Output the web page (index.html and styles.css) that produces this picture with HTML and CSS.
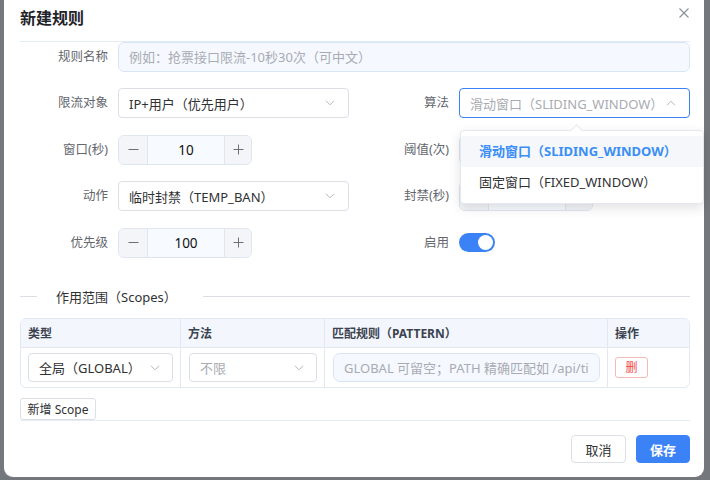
FILE: index.html
```html
<!DOCTYPE html>
<html lang="zh-CN">
<head>
<meta charset="utf-8">
<title>新建规则</title>
<link rel="stylesheet" href="styles.css">
</head>
<body>
<div class="overlay">
  <div class="dialog">
    <header class="dlg-head">
      <h2 class="dlg-title">新建规则</h2>
      <button class="close" aria-label="关闭">
        <svg width="10" height="10" viewBox="0 0 10 10"><path d="M0.5 0.5L9.5 9.5M9.5 0.5L0.5 9.5" stroke="#8b8f96" stroke-width="1.1" fill="none"/></svg>
      </button>
    </header>

    <div class="dlg-body">
      <div class="form-row">
        <label class="lbl">规则名称</label>
        <input class="input tint" placeholder="例如：抢票接口限流-10秒30次（可中文）">
      </div>

      <div class="grid2">
        <div class="item">
          <label class="lbl">限流对象</label>
          <div class="select"><span class="val">IP+用户（优先用户）</span>
            <svg class="chev" width="10" height="6" viewBox="0 0 10 6"><path d="M1 0.8L5 4.8L9 0.8" stroke="#b3b6bc" stroke-width="1" fill="none"/></svg></div>
        </div>
        <div class="item">
          <label class="lbl">算法</label>
          <div class="select focus"><span class="val muted">滑动窗口（SLIDING_WINDOW）</span>
            <svg class="chev" width="10" height="6" viewBox="0 0 10 6"><path d="M1 5.2L5 1.2L9 5.2" stroke="#b3b6bc" stroke-width="1" fill="none"/></svg></div>
        </div>

        <div class="item">
          <label class="lbl">窗口(秒)</label>
          <div class="num">
            <span class="nbtn"><svg width="11" height="11" viewBox="0 0 11 11"><path d="M0.5 5.5H10.5" stroke="#6b6f76" stroke-width="1"/></svg></span>
            <span class="nval">10</span>
            <span class="nbtn"><svg width="11" height="11" viewBox="0 0 11 11"><path d="M0.5 5.5H10.5M5.5 0.5V10.5" stroke="#6b6f76" stroke-width="1"/></svg></span>
          </div>
        </div>
        <div class="item">
          <label class="lbl">阈值(次)</label>
          <div class="num">
            <span class="nbtn"></span>
            <span class="nval"></span>
            <span class="nbtn"></span>
          </div>
        </div>

        <div class="item">
          <label class="lbl">动作</label>
          <div class="select"><span class="val">临时封禁（TEMP_BAN）</span>
            <svg class="chev" width="10" height="6" viewBox="0 0 10 6"><path d="M1 0.8L5 4.8L9 0.8" stroke="#b3b6bc" stroke-width="1" fill="none"/></svg></div>
        </div>
        <div class="item">
          <label class="lbl">封禁(秒)</label>
          <div class="num">
            <span class="nbtn"></span>
            <span class="nval"></span>
            <span class="nbtn"></span>
          </div>
        </div>

        <div class="item">
          <label class="lbl">优先级</label>
          <div class="num">
            <span class="nbtn"><svg width="11" height="11" viewBox="0 0 11 11"><path d="M0.5 5.5H10.5" stroke="#6b6f76" stroke-width="1"/></svg></span>
            <span class="nval">100</span>
            <span class="nbtn"><svg width="11" height="11" viewBox="0 0 11 11"><path d="M0.5 5.5H10.5M5.5 0.5V10.5" stroke="#6b6f76" stroke-width="1"/></svg></span>
          </div>
        </div>
        <div class="item">
          <label class="lbl">启用</label>
          <div class="switch"><span class="knob"></span></div>
        </div>
      </div>

      <div class="divider"><span class="dline short"></span><span class="dtext">作用范围（Scopes）</span><span class="dline"></span></div>

      <div class="table">
        <div class="th">类型</div>
        <div class="th">方法</div>
        <div class="th">匹配规则（PATTERN）</div>
        <div class="th">操作</div>
        <div class="td">
          <div class="select sm"><span class="val">全局（GLOBAL）</span>
            <svg class="chev" width="10" height="6" viewBox="0 0 10 6"><path d="M1 0.8L5 4.8L9 0.8" stroke="#b3b6bc" stroke-width="1" fill="none"/></svg></div>
        </div>
        <div class="td">
          <div class="select sm disabled"><span class="val muted">不限</span>
            <svg class="chev" width="10" height="6" viewBox="0 0 10 6"><path d="M1 0.8L5 4.8L9 0.8" stroke="#b3b6bc" stroke-width="1" fill="none"/></svg></div>
        </div>
        <div class="td">
          <input class="input tint sm" placeholder="GLOBAL 可留空；PATH 精确匹配如 /api/ticket/grab">
        </div>
        <div class="td">
          <button class="del">删</button>
        </div>
      </div>

      <button class="btn-add">新增 Scope</button>
    </div>

    <footer class="dlg-foot">
      <button class="btn">取消</button>
      <button class="btn primary">保存</button>
    </footer>

    <div class="dropdown">
      <span class="arrow"></span>
      <div class="opt active">滑动窗口（SLIDING_WINDOW）</div>
      <div class="opt">固定窗口（FIXED_WINDOW）</div>
    </div>
  </div>
</div>
</body>
</html>
```

FILE: styles.css
```css
* { box-sizing: border-box; }

body {
  margin: 0;
  height: 480px;
  overflow: hidden;
  background: #74777c;
  font-family: "Noto Sans", "Noto Sans CJK SC", sans-serif;
  font-size: 12.5px;
  color: #303133;
}

.overlay {
  padding-left: 4px;
}

.dialog {
  position: relative;
  width: 700px;
  height: 477px;
  background: #fff;
  border-radius: 0 0 9px 9px;
  display: flex;
  flex-direction: column;
  padding: 0 14px 0 16px;
}

.dlg-head {
  height: 42px;
  flex: none;
  border-bottom: 1px solid #e4ebf5;
  display: flex;
  justify-content: space-between;
  align-items: flex-start;
}

.dlg-title {
  margin: 9px 0 0 0;
  font-size: 16px;
  font-weight: 700;
  line-height: 18px;
  color: #1f2329;
}

.close {
  margin: 8px 1px 0 0;
  padding: 0;
  border: 0;
  background: none;
  width: 10px;
  height: 10px;
  display: flex;
}

.dlg-body {
  flex: 1;
  overflow: hidden;
  display: flex;
  flex-direction: column;
  align-items: stretch;
}

.form-row {
  display: grid;
  grid-template-columns: 98px 1fr;
  align-items: center;
}

.lbl {
  text-align: right;
  padding-right: 10px;
  color: #63666d;
  font-size: 12.5px;
  line-height: 16px;
}

.input {
  height: 30px;
  width: 100%;
  border: 1px solid #dfe6f0;
  border-radius: 6px;
  padding: 0 10px;
  font: inherit;
  font-size: 13px;
  color: #303133;
  outline: none;
}
.input.tint {
  background: #f5f9ff;
  border-color: #d9e5f7;
}
.input::placeholder { color: #a8abb2; }

.grid2 {
  margin-top: 16px;
  display: grid;
  grid-template-columns: 1fr 1fr;
  column-gap: 12px;
  row-gap: 16.5px;
}

.item {
  display: grid;
  grid-template-columns: 98px 1fr;
  align-items: center;
  height: 30px;
}

.select {
  height: 30px;
  border: 1px solid #dcdfe6;
  border-radius: 4px;
  background: #fff;
  display: flex;
  align-items: center;
  justify-content: space-between;
  padding: 0 13px 0 10px;
  font-size: 13px;
  color: #303133;
}
.select.focus { border-color: #3b82f6; }
.select .val { white-space: nowrap; overflow: hidden; }
.muted { color: #a8abb2; }
.chev { flex: none; }

.num {
  width: 134px;
  height: 30px;
  border: 1px solid #dfe6f0;
  border-radius: 6px;
  background: #f7faff;
  display: flex;
  overflow: hidden;
}
.nbtn {
  width: 29px;
  flex: none;
  background: #f3f5f9;
  display: flex;
  align-items: center;
  justify-content: center;
}
.nbtn:first-child { border-right: 1px solid #dfe6f0; }
.nbtn:last-child { border-left: 1px solid #dfe6f0; width: 27px; }
.nval {
  flex: 1;
  display: flex;
  align-items: center;
  justify-content: center;
  font-size: 13.5px;
  color: #111;
}

.switch {
  width: 36px;
  height: 19px;
  border-radius: 10px;
  background: #3b82f6;
  display: flex;
  align-items: center;
  justify-content: flex-end;
  padding-right: 2px;
}
.knob {
  width: 15px;
  height: 15px;
  border-radius: 50%;
  background: #fff;
}

.divider {
  margin-top: 29px;
  height: 20px;
  display: flex;
  align-items: center;
}
.dline {
  flex: 1;
  height: 1px;
  background: #dcdfe6;
}
.dline.short { flex: none; width: 17px; }
.dtext {
  margin: 0 26px 0 19px;
  font-size: 13px;
  color: #303133;
  white-space: nowrap;
}

.table {
  margin-top: 12px;
  border: 1px solid #e2e9f3;
  border-radius: 6px;
  display: grid;
  grid-template-columns: 160px 144px 283px 1fr;
  overflow: hidden;
}
.th {
  height: 29px;
  background: #f3f7fd;
  border-bottom: 1px solid #e2e9f3;
  border-right: 1px solid #e2e9f3;
  display: flex;
  align-items: center;
  padding-left: 7px;
  font-size: 12px;
  font-weight: 700;
  color: #3c4350;
}
.th:nth-child(4), .td:nth-child(8) { border-right: 0; }
.td {
  height: 39px;
  border-right: 1px solid #e2e9f3;
  padding: 5px 7px 0 7px;
}
.td:nth-child(6), .td:nth-child(7) { padding-left: 8px; }
.select.sm { height: 29px; padding: 0 12px 0 10px; }
.input.sm { height: 29px; border-radius: 7px; }
.del {
  margin-top: 4px;
  width: 33px;
  height: 21px;
  padding: 0;
  border: 1px solid #f7b9b9;
  border-radius: 3px;
  background: #fff;
  color: #f04848;
  font: inherit;
  font-size: 12px;
  line-height: 19px;
}

.btn-add {
  margin-top: 10px;
  align-self: flex-start;
  width: 76px;
  height: 22px;
  padding: 0;
  border: 1px solid #dcdfe6;
  border-radius: 3px;
  background: #fff;
  font: inherit;
  font-size: 12px;
  color: #303133;
}

.dlg-foot {
  flex: none;
  height: 57px;
  border-top: 1px solid #e6ecf5;
  display: flex;
  justify-content: flex-end;
  align-items: flex-start;
  gap: 10px;
  padding-top: 14px;
}
.btn {
  width: 55px;
  height: 28px;
  padding: 0;
  border: 1px solid #dcdfe6;
  border-radius: 4px;
  background: #fff;
  font: inherit;
  font-size: 13px;
  color: #303133;
}
.btn.primary {
  width: 54px;
  border-color: #3b82f6;
  background: #3b82f6;
  color: #fff;
  font-weight: 700;
}

.dropdown {
  position: absolute;
  left: 456px;
  top: 130px;
  width: 244px;
  padding: 5px 0;
  background: #fff;
  border: 1px solid #e4e7ed;
  border-radius: 4px;
  box-shadow: 0 4px 12px rgba(0, 0, 0, 0.12);
}
.arrow {
  position: absolute;
  left: 111px;
  top: -5px;
  width: 9px;
  height: 9px;
  background: #fff;
  border-left: 1px solid #e4e7ed;
  border-top: 1px solid #e4e7ed;
  transform: rotate(45deg);
}
.opt {
  height: 31px;
  line-height: 31px;
  padding: 0 18px;
  font-size: 13px;
  color: #303133;
  white-space: nowrap;
}
.opt.active {
  background: #f5f7fa;
  color: #3a8ef6;
  font-weight: 700;
}
```
